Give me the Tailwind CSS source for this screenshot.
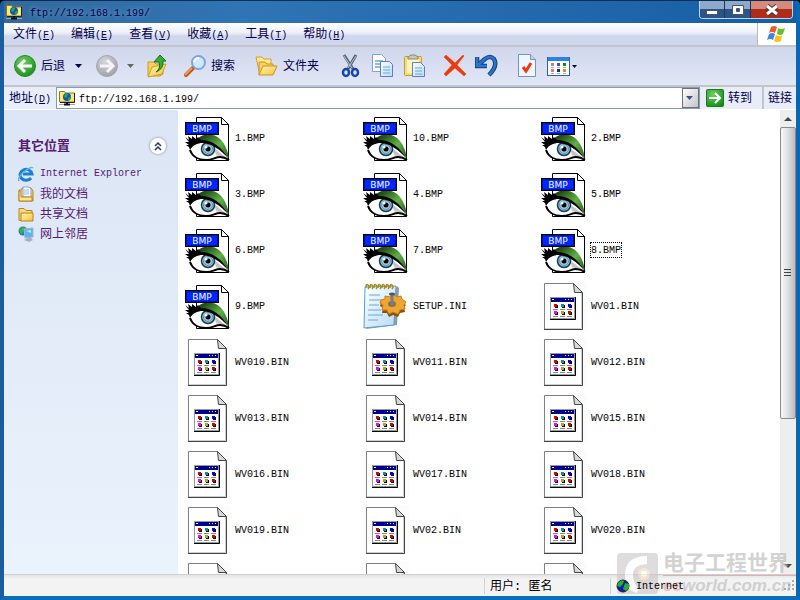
<!DOCTYPE html>
<html lang="zh-CN">
<head>
  <meta charset="UTF-8" />
  <meta name="viewport" content="width=device-width, initial-scale=1.0" />
  <title>ftp://192.168.1.199/</title>
  <script src="https://cdn.jsdelivr.net/npm/@tailwindcss/browser@4"></script>
</head>
<body class="h-screen overflow-hidden bg-black font-['Liberation_Mono','Noto_Sans_CJK_SC',monospace] text-[12px] leading-4 text-[#00004c]">

  <!-- Shared icons -->
  <svg class="absolute h-0 w-0" aria-hidden="true">
    <defs>
      <linearGradient id="lid" x1="0" y1="0" x2="1" y2="1">
        <stop offset="0" stop-color="#0a2408" /><stop offset=".35" stop-color="#3f7f2c" /><stop offset=".55" stop-color="#62b048" /><stop offset="1" stop-color="#1c5a12" />
      </linearGradient>
      <linearGradient id="folder" x1="0" y1="0" x2="1" y2="1">
        <stop offset="0" stop-color="#fff6b0" /><stop offset="1" stop-color="#f2c23c" />
      </linearGradient>
      <linearGradient id="paper" x1="0" y1="0" x2="1" y2="1">
        <stop offset="0" stop-color="#ffffff" /><stop offset="1" stop-color="#b5dcf8" />
      </linearGradient>
      <radialGradient id="green" cx=".4" cy=".3" r=".8">
        <stop offset="0" stop-color="#6fd05f" /><stop offset="1" stop-color="#118a18" />
      </radialGradient>
      <radialGradient id="grey" cx=".4" cy=".3" r=".8">
        <stop offset="0" stop-color="#d4d6da" /><stop offset="1" stop-color="#9a9ca2" />
      </radialGradient>
    </defs>
    <symbol id="icon-bmp" viewBox="0 0 48 48">
      <path d="M13.500 3.500H38.500L45.500 10.500V46.500H13.500Z" fill="#fff" stroke="#000" />
      <path d="M38.500 3.500V10.500H45.500Z" fill="#fff" stroke="#000" />
      <path d="M6 36C8 31 14 28 22 28C33 28 40 36 45 45C40 43 36 42 32 44C24 48 12 45 6 36Z" fill="#fff" />
      <path d="M31 34L45 45L33 41Z" fill="#c4c4c4" />
      <path d="M14 26C17 20 29 18 36 24C42 29 45 37 46 45C41 36 34 31 27 29C22 27 18 27 14 26Z" fill="url(#lid)" />
      <circle cx="25" cy="35" r="6.500" fill="#9ccbe2" stroke="#16384e" stroke-width="1.500" />
      <circle cx="25" cy="35" r="4.500" fill="none" stroke="#5a94b4" />
      <circle cx="25" cy="35" r="2.500" fill="#000" /><circle cx="23" cy="33" r="1.500" fill="#fff" />
      <path d="M2 23L6 26L5 22L9 25L9 22L13 25L15 23L18 26C29 26 39 33 46 45C37 35 29 30 20 29C14 29 10 31 7 36L6 33L3 31L6 31L2 28L6 28Z" fill="#000" />
      <path d="M7 36C9 42 15 46 23 46C30 46 32 43 37 43C40 43 43 44 46 46" fill="none" stroke="#000" stroke-width="2" />
      <rect x="2.500" y="8.500" width="33" height="12" fill="#0026ff" stroke="#000" />
      <rect x="3.500" y="9.500" width="31" height="10" fill="none" stroke="#0014b0" />
      <text x="19" y="18" text-anchor="middle" font-family="DejaVu Sans" font-size="9" fill="#fff">BMP</text>
    </symbol>
    <symbol id="icon-bin" viewBox="0 0 48 48">
      <rect width="48" height="48" fill="#fcfcfc" />
      <path d="M5.500 1.500H34.500L43.500 10.500V47.500H5.500Z" fill="#fff" stroke="#808080" />
      <path d="M42.500 11V46.500H6" fill="none" stroke="#d0d0d0" />
      <path d="M43.500 11V47.500H5" fill="none" stroke="#444" />
      <path d="M34.500 1.500L35.500 10.500H43.500Z" fill="#d8d8d8" stroke="#444" />
      <rect x="11" y="15" width="26" height="23" fill="#999" /><path d="M11 37.500H36.500V15" fill="none" stroke="#000" />
      <rect x="12" y="16" width="23" height="20" fill="#fff" /><rect x="12" y="16" width="23" height="4" fill="#000090" />
      <path d="M13 17.500h2M26 17.500h1M29 17.500h1M32 17.500h1" stroke="#ffe890" />
      <path d="M14 27.500h5M21 27.500h5M28 27.500h5M14 34.500h5M21 34.500h5M28 34.500h5" stroke="#888" />
      <path d="M17 23h2v3h-3v-1h1ZM24 23h2v3h-3v-1h1ZM31 23h2v3h-3v-1h1ZM17 30h2v3h-3v-1h1ZM24 30h2v3h-3v-1h1ZM31 30h2v3h-3v-1h1Z" fill="#000" />
      <rect x="15" y="22" width="3" height="3" fill="#e00000" /><rect x="22" y="22" width="3" height="3" fill="#009898" /><rect x="29" y="22" width="3" height="3" fill="#0000f0" />
      <rect x="15" y="29" width="3" height="3" fill="#f800f8" /><rect x="22" y="29" width="3" height="3" fill="#b0a800" /><rect x="29" y="29" width="3" height="3" fill="#d80000" />
    </symbol>
    <symbol id="icon-ini" viewBox="0 0 48 48">
      <path d="M5 47L36 43L38 6L36 4Z" fill="#8d9aa8" />
      <path d="M4 5L35 4L33 43L3 46Z" fill="url(#paper)" stroke="#5a9bd8" />
      <path d="M8 13H19M8 18H23M8 23H18M7 28H20M7 33H22M7 38H17" stroke="#6da4dc" />
      <path d="M5 6q0-5 2-3t0 4M9 6q0-5 2-3t0 4M13 6q0-5 2-3t0 4M17 6q0-5 2-3t0 4M21 6q0-5 2-3t0 4M25 6q0-5 2-3t0 4M29 6q0-5 2-3t0 4" fill="none" stroke="#a89020" stroke-width="1.500" />
      <path d="M20 21l4-1 0-3 5 1 3-3 4 3 4-1 1 3 4 3-2 3 1 4-5 1-2 4-5-2-4 2-2-4-5 0 1-5-3-2Z" fill="#8a5208" />
      <path d="M20 18l4-1 0-3 5 1 3-3 4 3 4-1 1 3 4 3-2 3 1 4-5 1-2 4-5-2-4 2-2-4-5 0 1-5-3-2Z" fill="#efa534" stroke="#cf8010" />
      <ellipse cx="31" cy="22" rx="4" ry="3" fill="#87704c" />
      <path d="M31 12V23" stroke="#777e88" stroke-width="3" /><ellipse cx="31" cy="12" rx="3" ry="1.500" fill="#50565e" />
    </symbol>
    <symbol id="icon-ftp" viewBox="0 0 16 16">
      <path d="M.5 1.500h5l1 1.500h9v9H.5Z" fill="#ffe87a" stroke="#8a7a10" />
      <path d="M15.500 3v9.500H1" fill="none" stroke="#222" />
      <circle cx="8" cy="7" r="4" fill="#1450c0" /><path d="M5 6q2-4 4-2l-1 3-2 1ZM9 8l3-2-1 4-2 1Z" fill="#20b040" />
      <path d="M0 14.500H5M11 14.500H16" stroke="#a0a8b0" /><path d="M8 12V14M5 14.500H11" stroke="#111" stroke-width="2" />
    </symbol>
    <symbol id="icon-arrow" viewBox="0 0 8 8"><path d="M0 2H7L3.500 6Z" fill="currentColor" /></symbol>
  </svg>

  <div class="flex h-full flex-col rounded-t-[5px] border-x-4 border-b-4 border-t border-b-[#0a6fba] border-l-[#1b5c9e] border-r-[#0868b4] border-t-[#0a2c58] bg-[#1b5c9e]">

    <!-- Title bar -->
    <header class="flex h-[22px] shrink-0 items-center bg-linear-to-r from-[#34699c] via-[#2f74b4] via-30% to-[#155ea4] pl-[2px] pr-[3px]">
      <svg class="mr-2 h-4 w-4"><use href="#icon-ftp" /></svg>
      <h1 class="pt-1 text-[10px] [text-shadow:0_0_5px_#8fb8e0]">ftp://192.168.1.199/</h1>
      <div class="ml-auto flex h-[18px] self-start overflow-hidden rounded-b-[4px] border border-t-0 border-[#b9d4ec] text-white">
        <button aria-label="最小化" class="flex w-[25px] items-center justify-center border-r border-[#17375f] bg-linear-to-b from-[#8fa9c8] from-45% to-[#2c5586] to-50%">
          <svg class="h-3 w-4" viewBox="0 0 16 12"><rect x="2.500" y="6.500" width="11" height="4" fill="#fff" stroke="#4a5568" /></svg>
        </button>
        <button aria-label="最大化" class="flex w-[26px] items-center justify-center border-r border-[#17375f] bg-linear-to-b from-[#8fa9c8] from-45% to-[#2c5586] to-50%">
          <svg class="h-3 w-4" viewBox="0 0 16 12"><path d="M2.500 1.500h11v9h-11ZM6.500 4.500v3h3v-3Z" fill="#fff" fill-rule="evenodd" stroke="#4a5568" /></svg>
        </button>
        <button aria-label="关闭" class="flex w-[41px] items-center justify-center bg-linear-to-b from-[#d58a7c] from-45% to-[#b02c18] to-50%">
          <svg class="h-3 w-4" viewBox="0 0 16 12"><path d="M3 2L13 10M13 2L3 10" stroke="#4a3038" stroke-width="5" /><path d="M3 2L13 10M13 2L3 10" stroke="#fff" stroke-width="3" /></svg>
        </button>
      </div>
    </header>

    <!-- Menu bar -->
    <nav class="flex h-6 shrink-0 border-b-2 border-[#c3c5ca] bg-linear-to-b from-white via-[#eceffb] via-45% to-[#d0d7ec] to-60% pl-px">
      <button class="px-2 pt-0.5">文件<span class="text-[10px]">(<u>F</u>)</span></button>
      <button class="px-2 pt-0.5">编辑<span class="text-[10px]">(<u>E</u>)</span></button>
      <button class="px-2 pt-0.5">查看<span class="text-[10px]">(<u>V</u>)</span></button>
      <button class="px-2 pt-0.5">收藏<span class="text-[10px]">(<u>A</u>)</span></button>
      <button class="px-2 pt-0.5">工具<span class="text-[10px]">(<u>T</u>)</span></button>
      <button class="px-2 pt-0.5">帮助<span class="text-[10px]">(<u>H</u>)</span></button>
      <div class="ml-auto flex w-[39px] items-center justify-center border-l border-[#b8bac2] bg-white">
        <svg class="h-5 w-5" viewBox="0 0 20 20">
          <path d="M4 3q3-2 6 0L8 9q-3-2-6 0Z" fill="#ea5b2a" /><path d="M11 4q3 2 7 0l-2 6q-3 2-6 0Z" fill="#6fbb2c" />
          <path d="M2 10q3-2 6 0l-2 6q-3-2-6 0Z" fill="#3f87e0" /><path d="M9 11q3 2 6 0l-1 6q-4 2-7 0Z" fill="#fbc21c" />
        </svg>
      </div>
    </nav>

    <!-- Toolbar -->
    <div class="flex h-10 shrink-0 items-center border-b-2 border-[#c3c5ca] bg-linear-to-b from-[#d0d7ec] to-[#e2e7f6] pl-[9px]">
      <button class="flex items-center gap-1">
        <svg class="h-6 w-6" viewBox="0 0 24 24"><circle cx="12" cy="12" r="10.500" fill="url(#green)" stroke="#2b8a2c" /><path d="M19 12H7M12 6L6 12L12 18" fill="none" stroke="#fff" stroke-width="3" /></svg>
        <span class="pt-0.5">后退</span>
      </button>
      <button aria-label="后退列表" class="ml-2.5"><svg class="h-2 w-2"><use href="#icon-arrow" /></svg></button>
      <button aria-label="前进" class="ml-3"><svg class="h-6 w-6" viewBox="0 0 24 24"><circle cx="12" cy="12" r="10.500" fill="url(#grey)" stroke="#a4a6aa" /><path d="M5 12H17M12 6L18 12L12 18" fill="none" stroke="#f4f4f6" stroke-width="3" /></svg></button>
      <button aria-label="前进列表" class="ml-2 text-[#666]"><svg class="h-2 w-2"><use href="#icon-arrow" /></svg></button>
      <button aria-label="向上" class="ml-2.5">
        <svg class="h-6 w-6" viewBox="0 0 24 24">
          <path d="M3 8h6l2 2h7v10l-3 2H3Z" fill="#f4d35a" stroke="#c89a20" /><path d="M7 13l14-3-4 10-14 3Z" fill="url(#folder)" stroke="#d0a028" />
          <path d="M11 18q5-3 3-10h-5L15 1l6 6h-3q1 8-7 11Z" fill="#3aac30" stroke="#16701a" />
        </svg>
      </button>
      <button class="ml-3.5 flex items-center gap-1">
        <svg class="h-6 w-6" viewBox="0 0 24 24"><path d="M10 14L3 21" stroke="#b85a20" stroke-width="4" stroke-linecap="round" /><path d="M9 14L2 21" stroke="#f0994c" stroke-width="2" /><circle cx="15.500" cy="8.500" r="6.500" fill="#cdeafc" stroke="#7fa5d8" stroke-width="2" /><path d="M11 8q1-4 5-4" fill="none" stroke="#fff" stroke-width="2" /></svg>
        <span class="pt-0.5">搜索</span>
      </button>
      <button class="ml-5 flex items-center gap-1">
        <svg class="h-6 w-6" viewBox="0 0 24 24"><path d="M1 3h6l2 2h7v12H4Z" fill="#ffe892" stroke="#d0a030" /><path d="M4 8h6l2 2h6v3H9L4 21Z" fill="#f6d060" stroke="#c89424" /><path d="M8 12h14l-4 9H4Z" fill="url(#folder)" stroke="#c89424" /></svg>
        <span class="pt-0.5">文件夹</span>
      </button>
      <button aria-label="剪切" class="ml-5"><svg class="h-6 w-6" viewBox="0 0 24 24"><path d="M5 1L14 15M17 1L9 15" stroke="#56677e" stroke-width="3" /><path d="M5 2L13 14M17 2L9 14" stroke="#b4c3d4" /><ellipse cx="7" cy="18.500" rx="3" ry="3.500" fill="none" stroke="#1746a8" stroke-width="2.500" /><ellipse cx="16" cy="18.500" rx="3" ry="3.500" fill="none" stroke="#1746a8" stroke-width="2.500" /></svg></button>
      <button aria-label="复制" class="ml-2"><svg class="h-6 w-6" viewBox="0 0 24 24"><path d="M1.500.5h9l4 4v13h-13Z" fill="#fff" stroke="#7ba2dc" /><path d="M4 7h8M4 10h8M4 13h8" stroke="#90b8ec" stroke-width="2" /><path d="M9.500 7.500h9l3 3v12h-12Z" fill="url(#paper)" stroke="#5c80bc" /><path d="M12 13h7M12 16h7M12 19h7" stroke="#6fa3e4" /></svg></button>
      <button aria-label="粘贴" class="ml-2"><svg class="h-6 w-6" viewBox="0 0 24 24"><rect x="1.500" y="2.500" width="17" height="19" rx="1" fill="#f9dc6c" stroke="#c49a34" /><rect x="4" y="5" width="12" height="14" fill="#fff4c4" /><path d="M5 5V3l3-2h4l3 2v2Z" fill="#c4c8b4" stroke="#878a70" /><path d="M9.500 8.500h8l4 4v10h-12Z" fill="url(#paper)" stroke="#5c80bc" /><path d="M12 14h7M12 17h7M12 20h7" stroke="#6fa3e4" /></svg></button>
      <button aria-label="删除" class="ml-4"><svg class="h-6 w-6" viewBox="0 0 24 24"><path d="M1 3L3 1L12 9L20 1L21 2L14 11L23 20L21 22L12 14L3 22L1 20L9 11Z" fill="#ec3a0c" stroke="#ec3a0c" stroke-width=".5" /></svg></button>
      <button aria-label="撤消" class="ml-2"><svg class="h-6 w-6" viewBox="0 0 24 24"><path d="M2 3V12H12M3 11L10 5Q15 1 19 5Q23 12 14 21" fill="none" stroke="#123f88" stroke-width="4.500" /><path d="M2 3V12H12M3 11L10 5Q15 1 19 5Q23 12 14 21" fill="none" stroke="#2c74c8" stroke-width="2.500" /></svg></button>
      <button aria-label="属性" class="ml-4"><svg class="h-6 w-6" viewBox="0 0 24 24"><path d="M3.500.5h12l5 5v17h-17Z" fill="#f0f6ff" stroke="#7392c8" /><path d="M15.500.5v5h5" fill="#c0d8f4" stroke="#7392c8" /><path d="M8 13L11 17L16 9" fill="none" stroke="#ee3a10" stroke-width="3" /></svg></button>
      <button aria-label="查看方式" class="ml-2 flex items-center">
        <svg class="h-6 w-6" viewBox="0 0 24 24"><rect x=".5" y="3.500" width="22" height="18" fill="#fff" stroke="#2a5fc0" /><rect x="1" y="3" width="21" height="4" fill="#2c80e8" />
          <rect x="4" y="9" width="3" height="3" fill="#8492cc" /><rect x="10" y="9" width="3" height="3" fill="#4848d0" /><rect x="16" y="9" width="3" height="3" fill="#0a9010" />
          <rect x="4" y="15" width="3" height="3" fill="#f07858" /><rect x="10" y="15" width="3" height="3" fill="#0a30a0" /><rect x="16" y="15" width="3" height="3" fill="#c49a10" />
          <path d="M4 13.500h3M10 13.500h3M16 13.500h3M4 19.500h3M10 19.500h3M16 19.500h3" stroke="#aab" />
        </svg>
        <svg class="h-2 w-2" viewBox="0 0 8 8"><path d="M1 3H6L3.500 6Z" fill="#00004c" /></svg>
      </button>
    </div>

    <!-- Address bar -->
    <form class="flex h-[22px] shrink-0 items-center bg-[#e9edfa]">
      <label for="address" class="w-[52px] pl-[5px] pt-0.5">地址<span class="text-[10px]">(<u>D</u>)</span></label>
      <div class="flex h-[22px] flex-1 items-center border border-[#7f9db9] bg-white pl-[2px]">
        <svg class="h-4 w-4"><use href="#icon-ftp" /></svg>
        <input id="address" type="text" value="ftp://192.168.1.199/" class="ml-1 h-5 min-w-0 flex-1 pt-0.5 text-[10px] text-black outline-none" />
        <button type="button" aria-label="地址列表" class="flex h-5 w-[17px] items-center justify-center border border-[#707070] bg-linear-to-br from-white to-[#c4c4c8] text-[#3a5684]"><svg class="h-2 w-2"><use href="#icon-arrow" /></svg></button>
      </div>
      <button type="button" class="ml-1.5 flex items-center gap-1">
        <svg class="h-[18px] w-[18px]" viewBox="0 0 18 18"><rect x=".5" y=".5" width="17" height="17" rx="1" fill="url(#green)" stroke="#1a7a20" /><path d="M3 9H14M9 4L14 9L9 14" fill="none" stroke="#fff" stroke-width="2" /></svg>
        <span class="pt-0.5">转到</span>
      </button>
      <button type="button" class="ml-[10px] h-full border-l-2 border-[#c3c5ca] px-1 pt-0.5">链接</button>
    </form>

    <div class="flex min-h-0 flex-1 bg-white pt-px">
      <!-- Side panel -->
      <aside class="w-[174px] shrink-0 bg-linear-to-b from-[#dce5f5] to-[#eaf2fc] pl-[14px] pr-3 pt-7 text-[#551a72]">
        <div class="mb-2.5 flex h-4 items-center justify-between">
          <h2 class="pt-0.5 text-[13px] font-bold">其它位置</h2>
          <button aria-label="折叠" class="h-4 w-4 rounded-full bg-white shadow-[0_0_2px_1px_#b0b4c4]"><svg class="h-4 w-4" viewBox="0 0 16 16"><path d="M5 8L8 5L11 8M5 12L8 9L11 12" fill="none" stroke="#26345c" stroke-width="1.500" /></svg></button>
        </div>
        <ul>
          <li><a href="#ie" class="flex h-5 items-center gap-1.5 text-[10px]">
            <svg class="h-4 w-4" viewBox="0 0 16 16"><path d="M13 12A6 5.500 0 1 1 14 8H5" fill="none" stroke="#1e7ed0" stroke-width="3" /><path d="M1 15Q-1 12 6 6T15 2" fill="none" stroke="#5ab8f0" stroke-width="1.500" /></svg>
            Internet Explorer</a></li>
          <li><a href="#documents" class="flex h-5 items-center gap-1.5">
            <svg class="h-4 w-4" viewBox="0 0 16 16"><path d="M1 4h3v-2h9l2 3v10H1Z" fill="url(#folder)" stroke="#b8821c" /><path d="M5 1h6l2 2v8H5Z" fill="#fff" stroke="#7ba2dc" /><path d="M6 4h5M6 6h5M6 8h5" stroke="#90b8ec" /><path d="M1 5h2v6h11v4H1Z" fill="#ffe890" stroke="#b8821c" /></svg>
            <span class="pt-0.5">我的文档</span></a></li>
          <li><a href="#shared" class="flex h-5 items-center gap-1.5">
            <svg class="h-4 w-4" viewBox="0 0 16 16"><path d="M1 2.500h5l2 2h6v10H1Z" fill="#f8dc78" stroke="#b8821c" /><path d="M3 7h12v8H3Z" fill="url(#folder)" stroke="#b8821c" /></svg>
            <span class="pt-0.5">共享文档</span></a></li>
          <li><a href="#network" class="flex h-5 items-center gap-1.5">
            <svg class="h-4 w-4" viewBox="0 0 16 16"><circle cx="5" cy="5" r="4.500" fill="#2b70d8" /><path d="M1 4q3-5 6-2l-2 4-2 3Z" fill="#38b438" /><path d="M6 3l9-1v9l-8 1Z" fill="#5ab4f4" stroke="#a8b4c8" /><path d="M8 5l5-1v3Z" fill="#c0e8ff" /><path d="M6 14l4-2h3l2 2-4 2Z" fill="#a9aebc" /></svg>
            <span class="pt-0.5">网上邻居</span></a></li>
        </ul>
      </aside>

      <!-- File list -->
      <main class="min-w-0 flex-1 overflow-hidden">
        <ul id="fileList" class="grid grid-cols-[repeat(auto-fill,178px)] pl-[5px] text-[10px] text-black"></ul>
      </main>

      <!-- Scroll bar -->
      <div class="flex w-4 shrink-0 flex-col bg-[#eeeeee]">
        <button aria-label="向上滚动" class="flex h-[17px] items-center justify-center"><svg class="h-2 w-2" viewBox="0 0 8 8"><path d="M0 6H8L4 2Z" fill="#444" /></svg></button>
        <div class="min-h-0 flex-1">
          <div class="flex h-[68%] items-center justify-center rounded-[2px] border border-[#888a90] bg-linear-to-r from-[#f8f8f8] via-[#e2e2e4] via-45% to-[#bcbcc2]">
            <svg class="h-2 w-2" viewBox="0 0 8 8"><path d="M0 .5H7M0 3.500H7M0 6.500H7" stroke="#444" /></svg>
          </div>
        </div>
        <button aria-label="向下滚动" class="flex h-[17px] items-center justify-center"><svg class="h-2 w-2" viewBox="0 0 8 8"><path d="M0 2H8L4 6Z" fill="#444" /></svg></button>
      </div>
    </div>

    <!-- Status bar -->
    <footer class="relative flex h-[22px] shrink-0 items-center border-t border-[#cfcfcf] bg-linear-to-b from-[#e4e4e4] to-[#f3f3f3] to-20% text-black">
      <!-- Watermark -->
      <div class="absolute right-0 bottom-0 flex items-center gap-1 whitespace-nowrap opacity-60" aria-hidden="true">
        <svg class="h-[42px] w-[42px]" viewBox="0 0 42 42"><rect width="41" height="41" rx="4" fill="#c9c5c5" /><path d="M30 3Q8 3 8 22Q8 36 19 40L23 36Q16 32 16 21Q16 12 30 11Z" fill="#fff" /><circle cx="27" cy="21" r="6" fill="#f6dcb4" /><circle cx="27" cy="21" r="3" fill="#fff" /></svg>
        <div class="w-[133px] font-['Liberation_Sans','Noto_Sans_CJK_SC',sans-serif] font-bold text-[#b9b7b7]">
          <div class="border-b border-[#e08a8a] text-[21px] leading-6">电子工程世界</div>
          <div class="text-[17px] italic leading-5"><span class="text-[#eaa0a0]">ee</span>world.com.cn</div>
        </div>
      </div>
      <div class="flex-1"></div>
      <p class="relative flex h-4 w-[126px] items-center border-l border-[#d0d0d8] pl-[5px]"><span class="pt-0.5">用户: 匿名</span></p>
      <p class="relative flex h-4 w-[186px] items-center gap-1 border-l border-[#d0d0d8] pl-[5px] text-[10px]">
        <svg class="h-4 w-4" viewBox="0 0 16 16"><circle cx="7" cy="8" r="6" fill="#1018b0" stroke="#223" /><path d="M2 5q4-4 6-2l-1 3-3 3-3-1ZM9 5l4 1v4l-3 3-3-2Z" fill="#28b028" /></svg>
        <span class="pt-0.5">Internet</span>
        <svg class="ml-auto h-3 w-3" viewBox="0 0 12 12" fill="#aaa"><path d="M8 0h2v2h-2ZM4 4h2v2h-2ZM8 4h2v2h-2ZM0 8h2v2h-2ZM4 8h2v2h-2ZM8 8h2v2h-2Z" /></svg>
      </p>
    </footer>
  </div>

  <script>
    const files = [
      "1.BMP", "10.BMP", "2.BMP", "3.BMP", "4.BMP", "5.BMP", "6.BMP", "7.BMP", "8.BMP", "9.BMP",
      "SETUP.INI", "WV01.BIN", "WV010.BIN", "WV011.BIN", "WV012.BIN", "WV013.BIN", "WV014.BIN",
      "WV015.BIN", "WV016.BIN", "WV017.BIN", "WV018.BIN", "WV019.BIN", "WV02.BIN", "WV020.BIN",
      "WV021.BIN", "WV022.BIN", "WV023.BIN"
    ];
    const focused = "8.BMP";

    document.getElementById("fileList").innerHTML = files.map(name => {
      const type = name.split(".")[1].toLowerCase();
      const outline = name === focused ? "outline-1 outline-dotted outline-black" : "";
      return `
        <li class="flex h-14 items-center gap-1">
          <svg class="h-12 w-12 shrink-0"><use href="#icon-${type}" /></svg>
          <span class="pt-0.5 leading-3 ${outline}">${name}</span>
        </li>`;
    }).join("");
  </script>
</body>
</html>
